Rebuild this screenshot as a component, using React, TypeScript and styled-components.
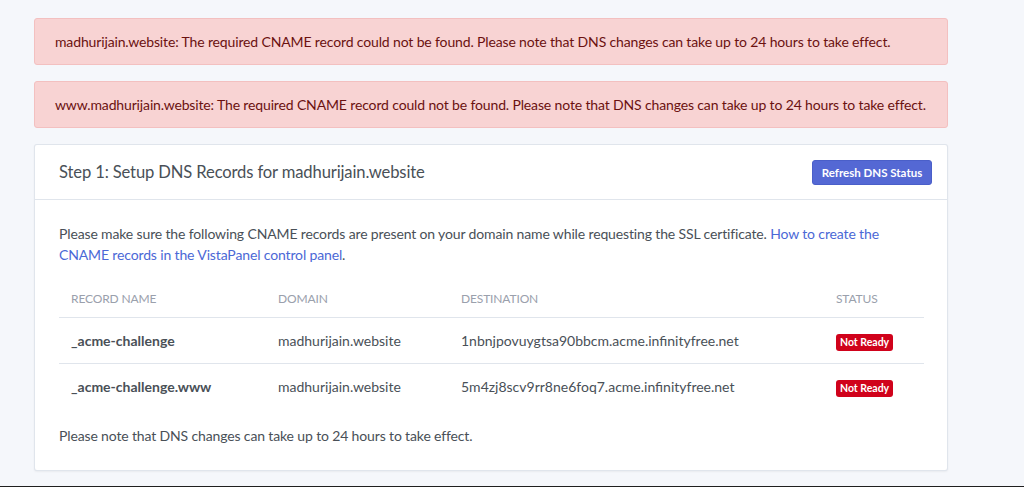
import React from "react";
import styled, { createGlobalStyle } from "styled-components";

const Global = createGlobalStyle`
  html, body { margin: 0; padding: 0; }
  body {
    background: #f5f7fb;
    font-family: Lato, "Liberation Sans", sans-serif;
    color: #495057;
    font-size: 14px;
    line-height: 1.5;
    letter-spacing: -0.14px;
  }
`;

const Page = styled.div`
  box-sizing: border-box;
  height: 487px;
  border-bottom: 1px solid #1f1f1f;
  padding: 18px 0 0 34px;
  overflow: hidden;
`;

const Column = styled.div`
  width: 914px;
  display: flex;
  flex-direction: column;
  gap: 16px;
`;

const Alert = styled.div`
  box-sizing: border-box;
  padding: 12px 20px;
  background: #f8d3d3;
  border: 1px solid #f3c0c0;
  border-radius: 3px;
  color: #6b1110;
  font-size: 14px;
  line-height: 21px;
`;

const Card = styled.div`
  background: #fff;
  border: 1px solid rgba(0, 40, 100, 0.12);
  border-radius: 3px;
  box-shadow: 0 1px 2px rgba(0, 0, 0, 0.05);
`;

const CardHeader = styled.div`
  height: 55px;
  box-sizing: border-box;
  padding: 1px 15px 0 24px;
  display: flex;
  align-items: center;
  justify-content: space-between;
  border-bottom: 1px solid rgba(0, 40, 100, 0.12);
`;

const Title = styled.h3`
  margin: 0;
  font-size: 16.6px;
  font-weight: 400;
  color: #495057;
`;

const Button = styled.button`
  width: 120px;
  height: 25px;
  border: 1px solid #4a5fc9;
  border-radius: 3px;
  background: #5468d4;
  color: #fff;
  font-family: inherit;
  font-size: 11.5px;
  font-weight: 700;
  letter-spacing: 0;
  padding: 0;
  cursor: pointer;
`;

const CardBody = styled.div`
  padding: 23px 24px 24px;
`;

const Text = styled.p`
  margin: 0 0 16px;
  line-height: 21px;
  &:last-child { margin-bottom: 0; }
`;

const Link = styled.a`
  color: #4b68d6;
  text-decoration: none;
`;

const Table = styled.table`
  width: 100%;
  table-layout: fixed;
  border-collapse: collapse;
  margin-bottom: 16px;
`;

const Th = styled.th<{ $w: number }>`
  width: ${(p) => p.$w}px;
  box-sizing: border-box;
  text-align: left;
  font-weight: 400;
  font-size: 12px;
  line-height: 18px;
  text-transform: uppercase;
  color: #9aa0ac;
  padding: 9px 12px;
  border-bottom: 1px solid rgba(0, 40, 100, 0.12);
`;

const Td = styled.td<{ $bold?: boolean }>`
  padding: 12px;
  line-height: 21px;
  letter-spacing: 0;
  font-weight: ${(p) => (p.$bold ? 700 : 400)};
  border-top: 1px solid rgba(0, 40, 100, 0.12);
  white-space: nowrap;
  tr:first-child > & { border-top: none; }
`;

const Badge = styled.span`
  display: inline-block;
  background: #d0021b;
  color: #fff;
  font-size: 10.5px;
  font-weight: 700;
  letter-spacing: 0;
  line-height: 1;
  padding: 3px 4px;
  border-radius: 3px;
  vertical-align: middle;
`;

const rows = [
  { name: "_acme-challenge", dest: "1nbnjpovuygtsa90bbcm.acme.infinityfree.net" },
  { name: "_acme-challenge.www", dest: "5m4zj8scv9rr8ne6foq7.acme.infinityfree.net" },
];

export default function App() {
  return (
    <>
      <Global />
      <Page>
        <Column>
          <Alert>
            madhurijain.website: The required CNAME record could not be found. Please note that DNS changes can take up to 24 hours to take effect.
          </Alert>
          <Alert>
            www.madhurijain.website: The required CNAME record could not be found. Please note that DNS changes can take up to 24 hours to take effect.
          </Alert>
          <Card>
            <CardHeader>
              <Title>Step 1: Setup DNS Records for madhurijain.website</Title>
              <Button>Refresh DNS Status</Button>
            </CardHeader>
            <CardBody>
              <Text>
                Please make sure the following CNAME records are present on your domain name while requesting the SSL certificate.{" "}
                <Link href="#">How to create the CNAME records in the VistaPanel control panel</Link>.
              </Text>
              <Table>
                <thead>
                  <tr>
                    <Th $w={207}>Record Name</Th>
                    <Th $w={183}>Domain</Th>
                    <Th $w={375}>Destination</Th>
                    <Th $w={100}>Status</Th>
                  </tr>
                </thead>
                <tbody>
                  {rows.map((r) => (
                    <tr key={r.name}>
                      <Td $bold>{r.name}</Td>
                      <Td>madhurijain.website</Td>
                      <Td>{r.dest}</Td>
                      <Td>
                        <Badge>Not Ready</Badge>
                      </Td>
                    </tr>
                  ))}
                </tbody>
              </Table>
              <Text>Please note that DNS changes can take up to 24 hours to take effect.</Text>
            </CardBody>
          </Card>
        </Column>
      </Page>
    </>
  );
}
